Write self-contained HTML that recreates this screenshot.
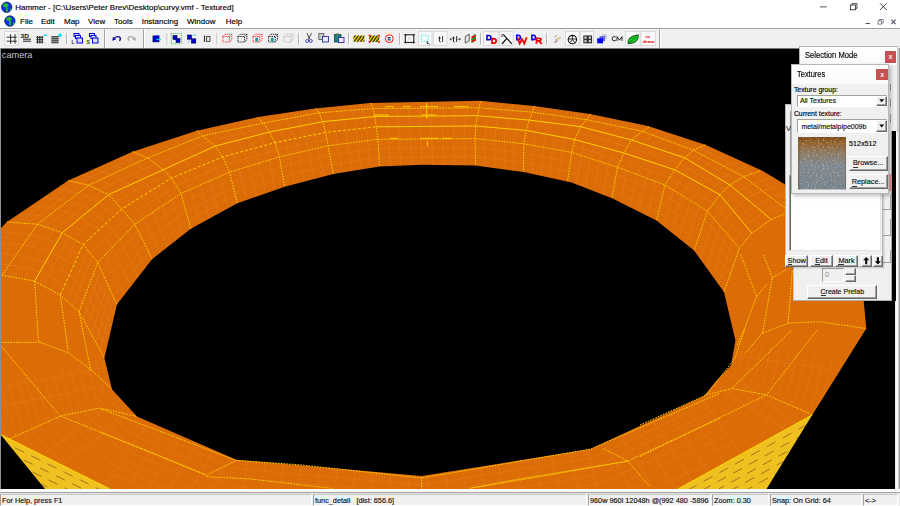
<!DOCTYPE html>
<html><head><meta charset="utf-8">
<style>
*{box-sizing:border-box;margin:0;padding:0}
html,body{width:900px;height:506px;overflow:hidden;background:#f0f0f0;font-family:"Liberation Sans",sans-serif;color:#000;-webkit-text-stroke:0.15px currentColor}
.a{position:absolute;white-space:pre}
#title{left:0;top:0;width:900px;height:14px;background:#fff}
#menu{left:0;top:14px;width:900px;height:14px;background:#fff}
#tb{left:0;top:29px;width:900px;height:20px;background:#f0f0f0}
#vp{left:1px;top:49px;width:894px;height:440px;background:#000;overflow:hidden}
.t8{font-size:8px;line-height:10px}
.t7{font-size:7px;line-height:9px}
.sb{top:494px;height:12px;border-top:1px solid #c8c8c8;border-left:1px solid #a0a0a0;border-right:1px solid #fff;border-bottom:1px solid #fff;font-size:7.3px;line-height:11px;padding-left:1px;overflow:hidden;color:#111}
.btn{background:#f0f0f0;border-top:1px solid #fff;border-left:1px solid #fff;border-right:1px solid #696969;border-bottom:1px solid #696969;box-shadow:inset -1px -1px 0 #a0a0a0;font-size:7.3px;line-height:10px;text-align:center;color:#111}
u{text-decoration:none;display:inline-block;line-height:6.2px;border-bottom:0.7px solid #333}
.combo{background:#fff;border-top:1px solid #a0a0a0;border-left:1px solid #a0a0a0;border-right:1px solid #fff;border-bottom:1px solid #fff;font-size:7px;line-height:10px;padding-left:1.5px}
.red{background:#c75050;color:#fff;font-size:7px;line-height:11px;text-align:center}
.combo{color:#111}
</style></head><body>
<div class="a" id="title"></div>
<div class="a t8" style="left:15.2px;top:3px">Hammer - [C:\Users\Peter Brev\Desktop\curvy.vmf - Textured]</div>
<div class="a" id="menu"></div>
<div class="a t8" style="left:20px;top:17px">File</div>
<div class="a t8" style="left:41px;top:17px">Edit</div>
<div class="a t8" style="left:64px;top:17px">Map</div>
<div class="a t8" style="left:88px;top:17px">View</div>
<div class="a t8" style="left:114px;top:17px">Tools</div>
<div class="a t8" style="left:141.7px;top:17px">Instancing</div>
<div class="a t8" style="left:187px;top:17px">Window</div>
<div class="a t8" style="left:225.7px;top:17px">Help</div>
<div class="a" style="left:0;top:28px;width:900px;height:1px;background:#a0a0a0"></div>
<div class="a" id="tb"></div>
<div class="a" style="left:0;top:48px;width:900px;height:1px;background:#7a7a7a"></div>
<svg class="a" style="left:0;top:0" width="900" height="50" viewBox="0 0 900 50">
<rect x="66" y="33" width="1" height="11.5" fill="#b4b4b4"/><rect x="67" y="33" width="1" height="11.5" fill="#fff"/>
<rect x="166.5" y="33" width="1" height="11.5" fill="#b4b4b4"/><rect x="167.5" y="33" width="1" height="11.5" fill="#fff"/>
<rect x="216.5" y="33" width="1" height="11.5" fill="#b4b4b4"/><rect x="217.5" y="33" width="1" height="11.5" fill="#fff"/>
<rect x="298" y="33" width="1" height="11.5" fill="#b4b4b4"/><rect x="299" y="33" width="1" height="11.5" fill="#fff"/>
<rect x="348" y="33" width="1" height="11.5" fill="#b4b4b4"/><rect x="349" y="33" width="1" height="11.5" fill="#fff"/>
<rect x="399" y="33" width="1" height="11.5" fill="#b4b4b4"/><rect x="400" y="33" width="1" height="11.5" fill="#fff"/>
<rect x="480" y="33" width="1" height="11.5" fill="#b4b4b4"/><rect x="481" y="33" width="1" height="11.5" fill="#fff"/>
<rect x="546" y="33" width="1" height="11.5" fill="#b4b4b4"/><rect x="547" y="33" width="1" height="11.5" fill="#fff"/>
<rect x="104" y="29.5" width="1" height="18.5" fill="#a0a0a0"/><rect x="105" y="29.5" width="1" height="18.5" fill="#fff"/>
<rect x="143" y="29.5" width="1" height="18.5" fill="#a0a0a0"/><rect x="144" y="29.5" width="1" height="18.5" fill="#fff"/>
<rect x="659" y="29.5" width="1" height="18.5" fill="#a0a0a0"/><rect x="660" y="29.5" width="1" height="18.5" fill="#fff"/>
<rect x="4.5" y="31.5" width="14.0" height="14.0" fill="#f9f9f9" stroke="#dadada" stroke-width="1"/>
<rect x="418.5" y="31.5" width="13.5" height="14.0" fill="#f9f9f9" stroke="#dadada" stroke-width="1"/>
<rect x="433.5" y="31.5" width="13.5" height="14.0" fill="#f9f9f9" stroke="#dadada" stroke-width="1"/>
<rect x="483.5" y="31.5" width="14.5" height="14.0" fill="#f9f9f9" stroke="#dadada" stroke-width="1"/>
<rect x="499.5" y="31.5" width="13.5" height="14.0" fill="#f9f9f9" stroke="#dadada" stroke-width="1"/>
<rect x="565.5" y="31.5" width="13.5" height="14.0" fill="#f9f9f9" stroke="#dadada" stroke-width="1"/>
<rect x="580.5" y="31.5" width="13.0" height="14.0" fill="#f9f9f9" stroke="#dadada" stroke-width="1"/>
<rect x="625.5" y="31.5" width="14.5" height="14.0" fill="#f9f9f9" stroke="#dadada" stroke-width="1"/>
<rect x="641" y="31.5" width="14.5" height="14.0" fill="#f9f9f9" stroke="#dadada" stroke-width="1"/>
<circle cx="6.7" cy="7.2" r="5.2" fill="#1030e0" stroke="#102060" stroke-width="0.8"/><path d="M3.7,3.7 Q7.7,2.2 8.7,5.2 L7.2,7.2 L8.2,11.2 L6.2,11.7 L5.7,7.2 L2.7,6.2Z" fill="#20c020"/><path d="M9.7,8.2 L11.7,9.2 L10.2,11.2Z" fill="#20c020"/>
<circle cx="9.9" cy="21" r="5.2" fill="#1030e0" stroke="#102060" stroke-width="0.8"/><path d="M6.9,17.5 Q10.9,16 11.9,19 L10.4,21 L11.4,25 L9.4,25.5 L8.9,21 L5.9,20Z" fill="#20c020"/><path d="M12.9,22 L14.9,23 L13.4,25Z" fill="#20c020"/>
<path d="M820,6.9H826.7" stroke="#222" stroke-width="0.8"/>
<rect x="850.5" y="5" width="5" height="4.8" fill="none" stroke="#222" stroke-width="0.8"/><path d="M852,5V3.6H857V8.4H855.5" fill="none" stroke="#222" stroke-width="0.8"/>
<path d="M880,3.3L886.7,10M886.7,3.3L880,10" stroke="#222" stroke-width="0.8"/>
<rect x="862.5" y="17" width="10.5" height="10" fill="#fff"/><rect x="875.5" y="17" width="10.5" height="10" fill="#fff"/><rect x="888" y="17" width="10" height="10" fill="#fff"/>
<path d="M865.5,23.5H870" stroke="#555" stroke-width="1.1"/>
<rect x="878" y="20.8" width="3.6" height="3.3" fill="none" stroke="#667" stroke-width="0.8"/><path d="M879.3,20.8V19.5H883.2V23H881.6" fill="none" stroke="#667" stroke-width="0.8"/>
<path d="M891.3,19.6L895.6,24.2M895.6,19.6L891.3,24.2" stroke="#556" stroke-width="1.2"/>
<!-- grid -->
<g stroke="#1a1a1a" stroke-width="0.9" fill="none">
<path d="M10.6,34.2V43.8M15,34.2V43.8M6.6,37.2H16.9M6.6,41.2H16.9"/>
</g>
<!-- 3D -->
<text x="20.6" y="37.8" font-family="Liberation Sans" font-weight="bold" font-size="6" fill="#111" textLength="8.4" lengthAdjust="spacingAndGlyphs">3D</text>
<path d="M23,39.2H31M23,41.2H31" stroke="#222" stroke-width="1"/>
<!-- grid minus -->
<path d="M37.5,36V43.4M39.8,36V43.4M42.1,36V43.4M36.3,37.3H43.3M36.3,39.7H43.3M36.3,42.1H43.3" stroke="#222" stroke-width="1"/>
<path d="M43.5,35.3H47" stroke="#00e0f0" stroke-width="1.3"/>
<!-- grid plus -->
<path d="M51.3,36.9H58.7M51.3,38.9H58.7M51.3,40.9H58.7M51.3,42.8H58.7" stroke="#222" stroke-width="1.1"/>
<path d="M58,35.3H62.2M60.1,33.2V37.4" stroke="#00e0f0" stroke-width="1.4"/>
<!-- L stack -->
<g fill="#dde" stroke="#0000e0" stroke-width="1">
<rect x="74" y="33.5" width="5" height="3"/><rect x="75.5" y="35.5" width="5" height="3"/><rect x="77" y="38" width="5.5" height="5"/>
<rect x="89.5" y="33.5" width="5" height="3"/><rect x="91" y="35.5" width="5" height="3"/><rect x="92.5" y="38" width="5.5" height="5"/>
</g>
<text x="71.4" y="43.6" font-family="Liberation Sans" font-weight="bold" font-size="5" fill="#333">L</text>
<text x="86.6" y="43.6" font-family="Liberation Sans" font-weight="bold" font-size="5" fill="#333">S</text>
<!-- undo/redo -->
<path d="M114.5,38.2 Q117,35.8 119.5,37 Q121.3,38.5 119.5,40.8" stroke="#000090" stroke-width="1.3" fill="none"/>
<path d="M112.3,40.8 L113,36.8 L116,39.6 Z" fill="#000090"/>
<path d="M134,38.2 Q131.5,35.8 129,37 Q127.2,38.5 129,40.8" stroke="#a8a8a8" stroke-width="1.2" fill="none"/>
<path d="M135.8,40.8 L135.2,36.8 L132.2,39.6 Z" fill="#a8a8a8"/>
<!-- blue cube arrow -->
<rect x="153" y="36" width="6" height="5.8" fill="#0000d8" stroke="#000050" stroke-width="0.8"/>
<path d="M153.5,36 L154.8,35 H159.6 L159,36Z" fill="#5060ff"/>
<path d="M156.5,39.5 H160.8" stroke="#00d8e8" stroke-width="1.3"/>
<!-- group -->
<rect x="171.3" y="33.5" width="10.3" height="10.3" fill="none" stroke="#30b030" stroke-width="0.9" stroke-dasharray="1,1"/>
<rect x="173" y="35.5" width="4" height="4" fill="#0000d0" stroke="#000040" stroke-width="0.6"/>
<rect x="176" y="38.5" width="4" height="4" fill="#0000d0" stroke="#000040" stroke-width="0.6"/>
<!-- ungroup -->
<rect x="187.5" y="35" width="4" height="4.2" fill="#0000d0" stroke="#000040" stroke-width="0.6"/>
<rect x="191.5" y="38.8" width="4.3" height="4.3" fill="#0000d0" stroke="#000040" stroke-width="0.6"/>
<path d="M192.5,35.5 L196,34.8 M187.5,42.5 L190,40.5" stroke="#40b8d8" stroke-width="0.8"/>
<!-- IQ -->
<path d="M204.5,35.6V41.8" stroke="#222" stroke-width="1.1"/>
<rect x="206.6" y="36.4" width="3.3" height="5" fill="none" stroke="#333" stroke-width="0.9"/>
<!-- dotted cubes -->
<g fill="none" stroke-width="1" stroke-dasharray="1,0.8">
<path d="M222.8,36.5 H229.5 V42 H222.8 Z M222.8,36.5 L225,34.3 H231.8 L229.5,36.5 M231.8,34.3 V39.8 L229.5,42" stroke="#ff2020"/>
<path d="M237.9,36.5 H244.6 V42 H237.9 Z M237.9,36.5 L240.1,34.3 H246.9 L244.6,36.5 M246.9,34.3 V39.8 L244.6,42" stroke="#111"/>
<path d="M253,36.5 H259.7 V42 H253 Z M253,36.5 L255.2,34.3 H262 L259.7,36.5 M262,34.3 V39.8 L259.7,42" stroke="#ff2020"/>
<path d="M268.6,36.5 H275.3 V42 H268.6 Z M268.6,36.5 L270.8,34.3 H277.6 L275.3,36.5 M277.6,34.3 V39.8 L275.3,42" stroke="#111"/>
<path d="M284.1,36.5 H290.8 V42 H284.1 Z M284.1,36.5 L286.3,34.3 H293.1 L290.8,36.5 M293.1,34.3 V39.8 L290.8,42" stroke="#b8b8b8"/>
</g>
<rect x="255.3" y="37.8" width="2.8" height="3.8" fill="#209898"/>
<rect x="270.9" y="37.8" width="2.8" height="3.8" fill="#209898"/>
<!-- scissors -->
<path d="M307,33.3 L309.8,39.5 M311.5,33.3 L308.2,39.5" stroke="#333" stroke-width="0.9"/>
<circle cx="307.2" cy="41" r="1.5" fill="none" stroke="#5050c0" stroke-width="1"/>
<circle cx="310.8" cy="41" r="1.5" fill="none" stroke="#5050c0" stroke-width="1"/>
<!-- copy -->
<rect x="318.8" y="33.5" width="5" height="6" fill="#c8c8c8" stroke="#555" stroke-width="0.8"/>
<rect x="322.5" y="36.5" width="6" height="5.5" fill="#e8e8ff" stroke="#3030a0" stroke-width="0.9"/>
<!-- paste -->
<rect x="334.5" y="34.5" width="6.5" height="7.5" fill="#208080" stroke="#104848" stroke-width="0.8"/>
<rect x="336.5" y="33.3" width="2.5" height="1.5" fill="#777"/>
<rect x="338.5" y="37.5" width="5.5" height="5" fill="#e8e8ff" stroke="#3030a0" stroke-width="0.9"/>
<!-- hazard -->
<defs><pattern id="hz" width="2.6" height="2.6" patternUnits="userSpaceOnUse" patternTransform="rotate(35)"><rect width="2.6" height="2.6" fill="#111"/><rect width="1.4" height="2.6" fill="#ffe800"/></pattern></defs>
<rect x="353.5" y="35.5" width="11" height="6.3" fill="url(#hz)"/>
<rect x="369.3" y="35.5" width="10" height="6.5" fill="url(#hz)"/>
<g fill="#ff1010"><circle cx="369.5" cy="35.4" r="1"/><circle cx="379" cy="35.4" r="1"/><circle cx="369.5" cy="42" r="1"/><circle cx="379" cy="42" r="1"/></g>
<circle cx="389.3" cy="38.7" r="3.9" fill="#fff" stroke="#ff1010" stroke-width="1"/>
<text x="387.6" y="40.5" font-family="Liberation Sans" font-weight="bold" font-size="4.6" fill="#111">R</text>
<!-- square corners -->
<rect x="405.3" y="34.8" width="8.5" height="7.6" fill="#f6f6f6" stroke="#111" stroke-width="1"/>
<g fill="#111"><circle cx="405.3" cy="34.8" r="0.9"/><circle cx="413.8" cy="34.8" r="0.9"/><circle cx="405.3" cy="42.4" r="0.9"/><circle cx="413.8" cy="42.4" r="0.9"/></g>
<path d="M408.3,37.3 L410.8,39.8 M410.8,37.3 L408.3,39.8" stroke="#bbb" stroke-width="0.6"/>
<!-- cyan dotted -->
<rect x="421.2" y="35.2" width="7" height="6.2" fill="none" stroke="#20e0f0" stroke-width="0.9" stroke-dasharray="0.9,0.9"/>
<path d="M427.3,41 V44 L428.2,43 L429.5,44.5" stroke="#222" stroke-width="0.8" fill="none"/>
<!-- tl -->
<path d="M439.5,36.5V41.5Q439.5,42 440.8,42M438.3,38.2H440.8M442.6,36V42" stroke="#333" stroke-width="1" fill="none"/>
<path d="M453.5,36.5V41.5Q453.5,42 454.8,42M452.3,38.2H454.8M456.6,36V42" stroke="#333" stroke-width="1" fill="none"/>
<path d="M450,39.2 H452.2 M450,39.2 L451.2,38.2 M450,39.2 L451.2,40.2 M457.5,39.2 H460.5 M460.5,39.2 L459.3,38.2 M460.5,39.2 L459.3,40.2" stroke="#333" stroke-width="0.8"/>
<!-- parallelograms -->
<path d="M465.3,36.5 L469.2,34.2 V40.8 L465.3,43 Z" fill="#eee" stroke="#333" stroke-width="0.8"/>
<path d="M471.5,36.5 L475.8,34.2 V40.8 L471.5,43 Z" fill="#e01010"/>
<path d="M471.5,38.8 L475.8,36.5 V38.5 L471.5,40.8Z M473.6,34.2 L475.8,34.2 V36 Z M471.5,43 V41.2 L473.5,42Z" fill="#10a030"/>
<!-- DD -->
<path d="M487.00,35.50V39.80H488.44Q491.00,39.80 491.00,37.65Q491.00,35.50 488.44,35.50Z" fill="none" stroke="#0000e0" stroke-width="1.6"/><path d="M492.00,38.70V43.10H493.46Q496.10,43.10 496.10,40.90Q496.10,38.70 493.46,38.70Z" fill="none" stroke="#e80000" stroke-width="1.8"/>
<text x="500.8" y="37.3" font-family="Liberation Sans" font-weight="bold" font-size="3.6" fill="#111">3</text>
<path d="M503.2,34.3 L511.8,43.8 M506.8,38.3 L502,44" stroke="#111" stroke-width="1.2" fill="none"/>
<path d="M516.80,35.30V39.60H518.08Q520.40,39.60 520.40,37.45Q520.40,35.30 518.08,35.30Z" fill="none" stroke="#0000e0" stroke-width="1.6"/><path d="M517.30,37.20L519.65,43.60L522.00,39.12L524.35,43.60L526.70,37.20" fill="none" stroke="#e80000" stroke-width="1.7"/>
<path d="M531.90,35.30V39.60H533.18Q535.50,39.60 535.50,37.45Q535.50,35.30 533.18,35.30Z" fill="none" stroke="#0000e0" stroke-width="1.6"/><path d="M536.45,43.80V38.35H538.70Q540.95,38.35 540.95,39.26Q540.95,40.96 538.70,40.96H536.45M538.70,40.96L541.80,43.80" fill="none" stroke="#e80000" stroke-width="1.7"/>
<!-- small colorful -->
<path d="M554.5,37 L557,35.5 M555,40 L560.5,37.5 M554,42.5 L558,40.5" stroke="#a09060" stroke-width="0.8"/>
<circle cx="556" cy="41.5" r="1" fill="#d060d0"/><circle cx="559.5" cy="38.5" r="0.9" fill="#e0d040"/>
<!-- circle globe -->
<circle cx="572.4" cy="39.6" r="4.2" fill="#fff" stroke="#111" stroke-width="1.1"/>
<path d="M568.3,39 H576.5 M572.4,35.5 V39 M570,42.5 L572.4,39.5 L574.8,42.5" stroke="#111" stroke-width="0.9" fill="none"/>
<!-- film grid -->
<rect x="583.3" y="35.4" width="8.8" height="8" fill="#333"/>
<path d="M584.5,36.5 H586.5 V38.8 H584.5Z M588.8,36.5 H590.8 V38.8 H588.8Z M584.5,40 H586.5 V42.3 H584.5Z M588.8,40 H590.8 V42.3 H588.8Z" fill="#ddd"/>
<!-- blue squares -->
<rect x="602" y="34.2" width="5" height="5" fill="#c8c8d8"/>
<rect x="599.5" y="36.2" width="5.5" height="5" fill="#6060e0"/>
<rect x="597.2" y="38.3" width="5.8" height="5" fill="#0000f0"/>
<!-- CM -->
<path d="M615.8,37.2Q615,36.6 614,36.6Q612.2,36.6 612.2,38.7Q612.2,40.8 614,40.8Q615,40.8 615.8,40.2M617,40.9V36.6L619.5,40.2L622,36.6V40.9" fill="none" stroke="#111" stroke-width="0.9"/>
<!-- leaf -->
<path d="M628.2,43.8 Q626.5,36.5 638.3,34.8 Q639,43.5 628.2,43.8Z" fill="#18c828" stroke="#084010" stroke-width="0.9"/><path d="M628.5,43.5 L636,37" stroke="#084010" stroke-width="0.6"/>
<!-- no draw -->
<text x="645.6" y="38.2" font-family="Liberation Sans" font-weight="bold" font-size="3.6" fill="#e00000">no</text>
<text x="642.8" y="42.5" font-family="Liberation Sans" font-weight="bold" font-size="4" fill="#e00000" textLength="11.5" lengthAdjust="spacingAndGlyphs">draw</text>

</svg>


<div class="a" id="vp">
<svg width="894" height="440" viewBox="1 49 894 440" style="position:absolute;left:0;top:0">
<path fill="#dc6d06" fill-rule="evenodd" d="M0.5,228.5 L6.9,222.1 L68.2,180.6 L132.5,151.7 L196.7,130.8 L258,117 L315,108.4 L370,103 L480,100.8 L534,106 L590,114 L648,126 L706,145 L761.8,170.4 L784.3,183.9 L830,240 L863.7,301 L866.3,328.6 L812.4,414.8 L678,489 L110,489 L0.5,434.5 Z
M104.4,358.1 L116.9,304.5 L152.2,259.1 L190.8,228.8 L237.3,203.3 L284.7,186.7 L333.3,174 L379.6,166.6 L422.2,164.8 L475.6,165.6 L523.6,172 L571.6,182.6 L612,198.2 L656.5,220.4 L694.1,250.6 L724,291.9 L735.4,340.5 L731.1,365.4 L716.4,380.7 L704,396 L590.5,449.1 L421.7,476 L236.3,459.8 L137,416.5 L111.9,389.3 Z"/>
<path fill="#f0c020" d="M0.5,434.5 L110,489 L45,489 L0.5,434.5 Z M812.4,414.8 L678,489 L766.5,489 Z"/>
<!--BG-->
<clipPath id="cro"><path d="M0.5,228.5 L6.9,222.1 L68.2,180.6 L132.5,151.7 L196.7,130.8 L258,117 L315,108.4 L370,103 L480,100.8 L534,106 L590,114 L648,126 L706,145 L761.8,170.4 L784.3,183.9 L830,240 L863.7,301 L866.3,328.6 L812.4,414.8 L678,489 L110,489 L0.5,434.5 Z"/></clipPath><clipPath id="cb"><path d="M0,340 L104,340 L104.4,358.1 L111.9,389.3 L137,416.5 L236.3,459.8 L421.7,476 L590.5,449.1 L704,396 L716.4,380.7 L731.1,365.4 L735.4,340.5 L900,340 L900,490 L0,490 Z"/></clipPath><g clip-path="url(#cro)"><path d="M95.6,360.2 L104.0,393.7 L132.6,424.3 L234.5,468.6 L422.0,485.0 L593.0,457.8 L708.3,403.9 L723.1,386.7 L739.2,369.2 L744.3,342.0 M86.9,362.3 L96.2,398.1 L128.1,432.2 L232.6,477.4 L422.2,494.0 L595.4,466.4 L712.6,411.8 L729.9,392.6 L747.4,373.1 L753.1,343.6 M78.1,364.4 L88.3,402.5 L123.7,440.0 L230.8,486.2 L422.5,503.0 L597.9,475.1 L716.9,419.7 L736.6,398.6 L755.5,376.9 L762.0,345.1 M69.4,366.5 L80.5,406.8 L119.3,447.8 L228.9,495.0 L422.8,512.0 L600.3,483.7 L721.2,427.6 L743.4,404.6 L763.6,380.8 L770.9,346.6 M60.6,368.6 L72.6,411.2 L114.8,455.7 L227.1,503.8 L423.1,521.0 L602.8,492.4 L725.5,435.5 L750.1,410.5 L771.8,384.6 L779.7,348.2 M51.9,370.7 L64.7,415.6 L110.4,463.5 L225.3,512.7 L423.3,530.0 L605.2,501.1 L729.8,443.4 L756.8,416.5 L779.9,388.5 L788.6,349.7 M43.1,372.8 L56.9,420.0 L105.9,471.3 L223.4,521.5 L423.6,539.0 L607.7,509.7 L734.1,451.4 L763.6,422.5 L788.1,392.3 L797.5,351.2 M34.4,374.9 L49.0,424.4 L101.5,479.1 L221.6,530.3 L423.9,548.0 L610.1,518.4 L738.4,459.3 L770.3,428.4 L796.2,396.2 L806.3,352.8 M25.6,377.0 L41.2,428.8 L97.1,487.0 L219.7,539.1 L424.1,557.0 L612.6,527.0 L742.7,467.2 L777.0,434.4 L804.3,400.0 L815.2,354.3 M16.9,379.1 L33.3,433.2 L92.6,494.8 L217.9,547.9 L424.4,566.0 L615.0,535.7 L747.0,475.1 L783.8,440.4 L812.5,403.9 L824.1,355.8 M8.1,381.2 L25.5,437.6 L88.2,502.6 L216.0,556.7 L424.7,575.0 L617.5,544.3 L751.3,483.0 L790.5,446.3 L820.6,407.7 L833.0,357.3 M-0.6,383.3 L17.6,441.9 L83.8,510.5 L214.2,565.5 L425.0,584.0 L619.9,553.0 L755.6,490.9 L797.3,452.3 L828.7,411.5 L841.8,358.9 M-9.4,385.4 L9.7,446.3 L79.3,518.3 L212.4,574.3 L425.2,592.9 L622.4,561.7 L759.9,498.8 L804.0,458.3 L836.9,415.4 L850.7,360.4 M106.5,366.9L-59.5,399.6 M110.7,384.4L-54.9,417.1 M120.7,398.8L-10.7,493.7 M132.9,412.0L2.6,507.0 M147.9,421.3L66.0,549.6 M164.4,428.5L84.1,556.8 M180.9,435.6L102.2,564.0 M197.4,442.8L120.2,571.2 M213.9,450.0L138.3,578.4 M230.4,457.2L156.4,585.6 M247.8,460.8L219.2,600.3 M265.8,462.4L238.9,601.8 M283.7,463.9L258.5,603.4 M301.6,465.5L278.2,605.0 M319.6,467.1L297.8,606.5 M337.5,468.6L317.4,608.1 M355.4,470.2L337.1,609.7 M373.3,471.8L356.7,611.2 M391.3,473.3L376.4,612.8 M409.2,474.9L396.0,614.4 M427.1,475.1L449.8,613.4 M444.9,472.3L469.3,610.6 M462.6,469.5L488.7,607.7 M480.4,466.6L508.2,604.9 M498.2,463.8L527.7,602.1 M516.0,461.0L547.1,599.2 M533.7,458.1L566.6,596.4 M551.5,455.3L586.1,593.6 M569.3,452.5L605.6,590.7 M587.1,449.6L625.0,587.9 M603.7,442.9L680.5,569.7 M620.0,435.3L698.3,562.1 M636.3,427.7L716.2,554.5 M652.6,420.1L734.1,546.9 M668.9,412.4L751.9,539.2 M685.2,404.8L769.8,531.6 M701.5,397.2L787.6,524.0 M713.6,384.2L850.3,472.3 M725.8,370.9L855.9,467.9 M732.9,355.2L900.6,379.1" clip-path="url(#cb)" fill="none" stroke="#f09048" stroke-opacity="0.3" stroke-width="0.8"/></g>
<!--/BG-->
<!--YM-->
<clipPath id="cl"><path d="M0.5,434.5 L110,489 L45,489 Z"/></clipPath><clipPath id="cr"><path d="M812.4,414.8 L678,489 L766.5,489 Z"/></clipPath>
<path d="M-33.4,424.1L140.2,509.4 M-40.8,428.2L137.1,515.7 M-48.2,432.4L134.0,521.9 M-42.7,442.9L130.9,528.2" clip-path="url(#cl)" fill="none" stroke="#705018" stroke-opacity="0.65" stroke-width="1" stroke-dasharray="10,8"/>
<path d="M640.6,516.0L855.6,397.9 M638.6,525.1L859.0,404.1 M636.6,534.2L862.3,410.2 M650.7,534.4L865.7,416.3 M648.7,543.5L869.1,422.5" clip-path="url(#cr)" fill="none" stroke="#705018" stroke-opacity="0.65" stroke-width="1" stroke-dasharray="10,8"/>
<path d="M0.5,434.5 L110,489 M812.4,414.8 L678,489" stroke="#ffe000" stroke-width="1"/>
<!--/YM-->
<!--RL-->
<path d="M-22.6,262.0L9.1,265.0 M-15.2,252.0L16.2,254.8 M-7.9,242.1L23.3,244.6 M-0.5,232.1L30.4,234.4 M-19.3,273.1L17.1,222.8 M-8.7,274.1L27.3,223.5 M9.1,265.0L40.1,271.4 M16.2,254.8L45.7,261.7 M23.3,244.6L51.2,252.1 M30.4,234.4L56.8,242.4 M12.9,277.2L45.8,227.0 M23.7,279.1L54.0,229.9 M40.1,271.4L64.8,284.9 M45.7,261.7L69.4,274.8 M51.2,252.1L73.9,264.8 M56.8,242.4L78.5,254.7 M43.2,285.7L69.2,236.7 M51.7,290.4L76.1,240.6 M64.8,284.9L82.8,301.8 M69.4,274.8L86.5,291.9 M73.9,264.8L90.3,282.1 M78.5,254.7L94.0,272.2 M66.5,300.5L87.9,250.5 M72.8,306.1L92.9,256.5 M82.8,301.8L106.9,347.4 M86.5,291.9L109.4,336.7 M90.3,282.1L111.9,325.9 M94.0,272.2L114.4,315.2 M83.2,319.4L101.0,269.4 M87.5,327.1L104.2,276.4 M91.7,334.9L107.3,283.4 M95.9,342.6L110.5,290.5 M100.2,350.4L113.7,297.5 M19.2,213.8L47.7,216.4 M31.4,205.5L57.9,208.6 M43.7,197.2L68.2,200.8 M55.9,188.9L78.4,193.0 M17.1,222.8L75.0,182.1 M27.3,223.5L81.8,183.7 M47.7,216.4L71.6,225.1 M57.9,208.6L80.9,217.5 M68.2,200.8L90.1,209.8 M78.4,193.0L99.4,202.2 M45.8,227.0L95.3,188.3 M54.0,229.9L102.0,191.5 M71.6,225.1L90.8,237.5 M80.9,217.5L98.5,230.3 M90.1,209.8L106.3,223.2 M99.4,202.2L114.0,216.0 M72.7,238.6L115.2,201.8 M90.8,237.5L105.2,254.8 M98.5,230.3L112.6,247.2 M106.3,223.2L120.0,239.5 M114.0,216.0L127.4,231.9 M90.4,253.5L128.3,216.6 M105.2,254.8L124.0,295.4 M112.6,247.2L131.0,286.3 M120.0,239.5L138.1,277.3 M127.4,231.9L145.1,268.2 M101.6,270.8L138.3,231.3 M105.4,279.2L141.8,238.2 M109.3,287.7L145.2,245.2 M113.1,296.1L148.7,252.1 M81.1,174.8L100.4,179.7 M93.9,169.0L112.3,174.3 M106.8,163.3L124.1,168.8 M119.6,157.5L136.0,163.4 M78.4,182.9L140.2,154.8 M100.4,179.7L119.6,189.6 M112.3,174.3L130.5,184.7 M124.1,168.8L141.4,179.7 M136.0,163.4L152.3,174.8 M98.7,189.9L155.5,163.9 M119.6,189.6L131.7,202.7 M130.5,184.7L141.7,196.6 M141.4,179.7L151.6,190.4 M152.3,174.8L161.6,184.3 M115.2,201.8L167.3,173.9 M131.7,202.7L144.0,218.1 M141.7,196.6L153.3,212.0 M151.6,190.4L162.5,205.8 M161.6,184.3L171.8,199.7 M128.3,216.6L176.2,185.8 M144.0,218.1L159.9,253.0 M153.3,212.0L167.6,247.0 M162.5,205.8L175.4,240.9 M171.8,199.7L183.1,234.9 M139.2,233.0L183.4,202.3 M143.5,241.7L185.9,211.2 M147.8,250.4L188.4,220.0 M145.3,147.5L158.8,153.5 M158.2,143.4L169.7,149.1 M171.0,139.2L180.7,144.7 M183.9,135.1L191.6,140.3 M158.8,153.5L173.6,165.0 M169.7,149.1L184.0,160.3 M180.7,144.7L194.4,155.5 M191.6,140.3L204.8,150.8 M155.5,163.9L208.9,140.9 M173.6,165.0L181.8,173.9 M184.0,160.3L192.0,169.6 M194.4,155.5L202.3,165.4 M204.8,150.8L212.5,161.1 M181.8,173.9L190.7,189.2 M192.0,169.6L200.4,184.9 M202.3,165.4L210.1,180.7 M212.5,161.1L219.8,176.4 M176.2,185.8L226.2,164.5 M190.7,189.2L200.1,223.7 M200.4,184.9L209.4,218.6 M210.1,180.7L218.7,213.5 M219.8,176.4L228.0,208.4 M183.4,202.3L231.4,179.9 M185.9,211.2L233.4,187.7 M188.4,220.0L235.4,195.5 M209.0,128.3L214.7,133.3 M221.2,125.7L226.9,130.8 M233.5,123.0L239.0,128.2 M245.7,120.4L251.2,125.7 M214.7,133.3L226.1,143.2 M226.9,130.8L237.0,140.4 M239.0,128.2L247.8,137.6 M251.2,125.7L258.7,134.8 M208.9,140.9L266.5,127.5 M226.1,143.2L233.2,154.1 M237.0,140.4L243.6,151.2 M247.8,137.6L254.1,148.4 M258.7,134.8L264.5,145.5 M233.2,154.1L239.5,169.1 M243.6,151.2L249.5,166.0 M254.1,148.4L259.4,163.0 M264.5,145.5L269.4,159.9 M226.2,164.5L277.1,149.8 M239.5,169.1L246.8,200.0 M249.5,166.0L256.3,196.7 M259.4,163.0L265.7,193.3 M269.4,159.9L275.2,190.0 M232.1,182.5L281.2,166.8 M234.7,192.9L282.9,176.8 M269.5,115.9L274.5,121.0 M281.1,114.0L285.7,119.0 M292.6,112.1L296.8,116.9 M304.2,110.2L308.0,114.9 M274.5,121.0L280.2,129.9 M285.7,119.0L290.9,127.9 M296.8,116.9L301.5,125.8 M308.0,114.9L312.2,123.8 M280.2,129.9L285.0,140.6 M290.9,127.9L295.1,138.6 M301.5,125.8L305.3,136.5 M312.2,123.8L315.4,134.5 M285.0,140.6L289.1,154.7 M295.1,138.6L298.9,152.4 M305.3,136.5L308.6,150.2 M315.4,134.5L318.4,147.9 M277.1,149.8L326.8,139.1 M289.1,154.7L294.4,184.2 M298.9,152.4L304.1,181.6 M308.6,150.2L313.9,179.1 M318.4,147.9L323.6,176.5 M281.2,166.8L329.8,155.1 M282.9,176.8L331.6,164.6 M326.7,107.3L330.0,112.0 M337.7,106.2L340.8,111.1 M348.8,105.2L351.6,110.3 M359.8,104.1L362.4,109.4 M330.0,112.0L333.2,120.7 M340.8,111.1L343.6,119.6 M351.6,110.3L353.9,118.6 M362.4,109.4L364.3,117.5 M333.2,120.7L335.7,131.3 M343.6,119.6L345.8,130.2 M353.9,118.6L356.0,129.0 M364.3,117.5L366.1,127.9 M335.7,131.3L338.1,144.4 M345.8,130.2L348.0,143.2 M356.0,129.0L358.0,141.9 M366.1,127.9L367.9,140.7 M338.1,144.4L342.6,172.5 M348.0,143.2L351.8,171.0 M358.0,141.9L361.1,169.6 M367.9,140.7L370.3,168.1 M329.8,155.1L378.5,148.5 M331.6,164.6L379.0,157.5 M383.0,102.9L385.0,108.5 M395.2,102.7L396.7,108.4 M407.4,102.6L408.5,108.3 M419.6,102.4L420.2,108.2 M431.7,102.2L432.0,108.2 M443.9,102.0L443.7,108.1 M456.1,101.9L455.5,108.0 M468.3,101.7L467.2,107.9 M385.0,108.5L386.1,116.4 M396.7,108.4L397.5,116.3 M408.5,108.3L408.9,116.2 M420.2,108.2L420.3,116.1 M432.0,108.2L431.8,116.1 M443.7,108.1L443.2,116.0 M455.5,108.0L454.6,115.9 M467.2,107.9L466.0,115.8 M386.1,116.4L387.4,126.7 M397.5,116.3L398.4,126.6 M408.9,116.2L409.5,126.5 M420.3,116.1L420.5,126.4 M431.8,116.1L431.6,126.4 M443.2,116.0L442.6,126.3 M454.6,115.9L453.7,126.2 M466.0,115.8L464.7,126.1 M387.4,126.7L388.7,139.3 M398.4,126.6L399.5,139.2 M409.5,126.5L410.3,139.1 M420.5,126.4L421.1,139.0 M431.6,126.4L431.8,139.0 M442.6,126.3L442.6,138.9 M453.7,126.2L453.4,138.8 M464.7,126.1L464.2,138.7 M388.7,139.3L390.3,166.5 M399.5,139.2L400.9,166.4 M410.3,139.1L411.6,166.3 M421.1,139.0L422.3,166.2 M431.8,139.0L432.9,166.0 M442.6,138.9L443.6,165.9 M453.4,138.8L454.3,165.8 M464.2,138.7L464.9,165.7 M378.5,148.5L475.2,147.6 M379.0,157.5L475.4,156.6 M491.4,102.4L489.7,108.7 M502.2,103.3L500.4,109.6 M513.1,104.1L511.0,110.4 M523.9,105.0L521.7,111.3 M489.7,108.7L487.8,116.6 M500.4,109.6L498.1,117.5 M511.0,110.4L508.5,118.3 M521.7,111.3L518.8,119.2 M487.8,116.6L485.9,126.9 M498.1,117.5L495.9,127.8 M508.5,118.3L506.0,128.6 M518.8,119.2L516.0,129.5 M485.9,126.9L484.7,139.6 M495.9,127.8L494.5,140.7 M506.0,128.6L504.2,141.7 M516.0,129.5L514.0,142.8 M484.7,139.6L485.2,166.9 M494.5,140.7L494.8,168.2 M504.2,141.7L504.4,169.4 M514.0,142.8L514.0,170.7 M475.2,147.6L523.7,153.2 M475.4,156.6L523.6,162.6 M546.0,107.5L543.2,113.7 M557.1,109.1L554.1,115.2 M568.3,110.7L564.9,116.8 M579.4,112.3L575.8,118.3 M543.2,113.7L539.5,121.4 M554.1,115.2L549.8,122.7 M564.9,116.8L560.1,124.1 M575.8,118.3L570.4,125.4 M539.5,121.4L535.8,132.2 M549.8,122.7L545.6,134.1 M560.1,124.1L555.3,135.9 M570.4,125.4L565.1,137.8 M535.8,132.2L533.3,145.5 M545.6,134.1L542.9,147.2 M555.3,135.9L552.6,149.0 M565.1,137.8L562.2,150.7 M533.3,145.5L532.4,173.9 M542.9,147.2L541.2,175.8 M552.6,149.0L549.9,177.7 M562.2,150.7L558.7,179.6 M523.7,153.2L570.4,162.1 M523.6,162.6L568.9,171.8 M602.3,116.5L597.8,122.1 M613.9,119.1L608.9,124.4 M625.6,121.8L620.1,126.7 M637.2,124.4L631.2,129.0 M597.8,122.1L590.9,129.4 M608.9,124.4L601.0,132.0 M620.1,126.7L611.2,134.7 M631.2,129.0L621.3,137.3 M590.9,129.4L584.6,142.3 M601.0,132.0L594.4,145.0 M611.2,134.7L604.3,147.6 M621.3,137.3L614.1,150.3 M577.8,133.2L627.7,146.5 M584.6,142.3L580.9,155.4 M594.4,145.0L590.0,158.3 M604.3,147.6L599.2,161.3 M614.1,150.3L608.3,164.2 M573.3,146.0L620.6,160.1 M580.9,155.4L576.4,184.8 M590.0,158.3L585.3,188.2 M599.2,161.3L594.2,191.5 M608.3,164.2L603.1,194.9 M570.4,162.1L615.6,177.5 M568.9,171.8L613.8,187.9 M660.2,130.6L652.6,135.1 M671.4,134.1L662.8,138.9 M682.7,137.7L672.9,142.6 M693.9,141.2L683.1,146.4 M652.6,135.1L642.1,143.6 M662.8,138.9L652.7,147.1 M672.9,142.6L663.4,150.7 M683.1,146.4L674.0,154.2 M642.1,143.6L634.1,156.4 M652.7,147.1L644.3,159.7 M663.4,150.7L654.4,163.1 M674.0,154.2L664.6,166.4 M627.7,146.5L679.7,163.8 M634.1,156.4L626.9,170.8 M644.3,159.7L636.4,174.3 M654.4,163.1L646.0,177.9 M664.6,166.4L655.5,181.4 M620.6,160.1L669.9,177.4 M626.9,170.8L620.9,202.6 M636.4,174.3L629.8,207.1 M646.0,177.9L638.7,211.5 M655.5,181.4L647.6,216.0 M616.0,174.9L662.9,193.8 M614.7,182.7L660.8,202.7 M613.4,190.4L658.6,211.6 M716.2,150.1L703.4,155.5 M727.2,155.3L713.4,160.8 M738.2,160.6L723.5,166.0 M749.2,165.8L733.5,171.3 M699.2,147.5L751.9,173.8 M703.4,155.5L693.6,163.2 M713.4,160.8L702.7,168.6 M723.5,166.0L711.7,174.1 M733.5,171.3L720.8,179.5 M689.0,154.0L736.7,180.8 M693.6,163.2L683.8,174.8 M702.7,168.6L692.9,179.8 M711.7,174.1L701.9,184.8 M720.8,179.5L711.0,189.8 M679.7,163.8L724.9,189.9 M683.8,174.8L673.5,190.2 M692.9,179.8L682.0,195.4 M701.9,184.8L690.4,200.7 M711.0,189.8L698.9,205.9 M669.9,177.4L713.7,202.9 M673.5,190.2L664.0,226.4 M682.0,195.4L671.5,232.5 M690.4,200.7L679.1,238.5 M698.9,205.9L686.6,244.6 M662.9,193.8L704.1,221.0 M660.8,202.7L700.8,230.8 M658.6,211.6L697.4,240.7 M770.2,177.9L752.9,183.7 M780.1,184.7L762.2,190.8 M790.1,191.4L771.4,197.8 M800.0,198.2L780.7,204.9 M751.9,173.8L800.0,208.5 M752.9,183.7L738.1,191.8 M762.2,190.8L746.4,198.7 M771.4,197.8L754.6,205.6 M780.7,204.9L762.9,212.5 M736.7,180.8L780.6,215.7 M738.1,191.8L726.4,202.5 M746.4,198.7L732.8,210.2 M754.6,205.6L739.1,217.8 M762.9,212.5L745.5,225.5 M724.9,189.9L761.5,226.3 M726.4,202.5L713.8,218.6 M732.8,210.2L720.2,226.0 M739.1,217.8L726.6,233.5 M745.5,225.5L733.0,240.9 M713.7,202.9L745.6,240.8 M713.8,218.6L700.1,258.9 M720.2,226.0L706.1,267.1 M726.6,233.5L712.0,275.4 M733.0,240.9L718.0,283.6 M704.7,219.0L736.3,257.1 M702.1,226.9L733.2,265.8 M699.4,234.8L730.2,274.5 M696.8,242.7L727.1,283.2" fill="none" stroke="#f09048" stroke-opacity="0.3" stroke-width="0.8"/>
<path d="M2.0,275.2 L34.6,281.1 L60.3,295.0 L79.0,311.6 L104.4,358.1 M6.9,222.1 L37.5,224.2 L62.3,232.7 L83.0,244.6 L97.8,262.4 L116.9,304.5 M68.2,180.6 L88.6,185.2 L108.7,194.6 L121.8,208.9 L134.8,224.3 L152.2,259.1 M132.5,151.7 L147.8,157.9 L163.2,169.8 L171.5,178.1 L181.0,193.5 L190.8,228.8 M196.7,130.9 L202.6,135.9 L215.2,146.0 L222.8,156.9 L229.5,172.1 L237.3,203.3 M258.0,117.8 L263.3,123.1 L269.6,132.0 L274.9,142.7 L279.4,156.9 L284.7,186.7 M315.7,108.3 L319.2,112.8 L322.8,121.7 L325.5,132.4 L328.1,145.7 L333.3,174.0 M370.8,103.1 L373.2,108.6 L374.7,116.5 L376.3,126.8 L377.9,139.4 L379.6,166.6 M480.5,101.5 L479.0,107.8 L477.4,115.7 L475.8,126.0 L475.0,138.6 L475.6,165.6 M534.8,105.9 L532.4,112.2 L529.2,120.1 L526.1,130.4 L523.7,143.8 L523.6,172.0 M590.6,113.9 L586.6,119.8 L580.7,126.7 L574.8,139.6 L571.8,152.4 L567.5,181.5 M648.9,127.0 L642.4,131.3 L631.5,140.0 L623.9,153.0 L617.4,167.2 L612.0,198.2 M705.2,144.8 L693.3,150.2 L684.6,157.8 L674.8,169.8 L665.0,185.0 L656.5,220.4 M760.2,171.1 L743.6,176.6 L729.8,184.9 L720.0,194.8 L707.4,211.1 L694.1,250.6 M810.0,205.0 L790.0,212.0 L771.2,219.4 L751.9,233.2 L739.4,248.4 L724.0,291.9" fill="none" stroke="#ffd000" stroke-width="1" stroke-dasharray="1.6,1.2"/>
<path d="M2.0,275.2 L37.5,224.2 L88.6,185.2 L147.8,157.9 L202.6,135.9 L263.3,123.1 L319.2,112.8 L373.2,108.6 L479.0,107.8 L532.4,112.2 L586.6,119.8 L642.4,131.3 L693.3,150.2 L743.6,176.6 L790.0,212.0" fill="none" stroke="#ffd000" stroke-width="1" stroke-dasharray="1.6,1.2"/>
<path d="M34.6,281.1 L62.3,232.7 L108.7,194.6 L163.2,169.8 L215.2,146.0 L269.6,132.0 L322.8,121.7 L374.7,116.5 L477.4,115.7 L529.2,120.1 L580.7,126.7 L631.5,140.0 L684.6,157.8 L729.8,184.9 L771.2,219.4" fill="none" stroke="#ffd000" stroke-width="1" />
<path d="M79.0,311.6 L97.8,262.4 L134.8,224.3 L181.0,193.5 L229.5,172.1 L279.4,156.9 L328.1,145.7 L377.9,139.4 L475.0,138.6 L523.7,143.8 L571.8,152.4 L617.4,167.2 L665.0,185.0 L707.4,211.1 L739.4,248.4" fill="none" stroke="#ffd000" stroke-width="1" stroke-dasharray="1.6,1.2"/>
<path d="M60.3,295.0 L83.0,244.6 L121.8,208.9 L171.5,178.1 L222.8,156.9 L274.9,142.7 L325.5,132.4 L376.3,126.8" fill="none" stroke="#ffd000" stroke-width="1" stroke-dasharray="3,2"/>
<path d="M376.3,126.8 L475.8,126.0 L526.1,130.4 L574.8,139.6 L623.9,153.0 L674.8,169.8 L720.0,194.8 L751.9,233.2" fill="none" stroke="#ffd000" stroke-width="1"/>
<path d="M2.0,346.9 L59.3,415.1 M39.5,342.0 L68.2,352.8 L90.9,369.6 L111.9,389.3 M34.6,281.1 L38.5,342.3 M60.3,295.0 L68.2,351.1 M79.0,311.6 L90.9,371.0 M7.1,440.0 L60.5,416.0 L99.6,408.0 L137.0,416.5 M60.5,416.0 L140.0,448.0 L206.7,475.2 L236.3,460.4 M100.0,408.5 L236.3,460.4 L300.0,464.8 L421.7,478.0 L590.5,449.1 L720.0,393.2 M100.0,432.2 L206.7,475.2 M206.7,476.7 L250.0,479.0 L333.0,488.5 M470.0,488.3 L550.0,475.0 L627.9,461.0 L720.0,418.0 M421.7,477 L421.7,489 M603.0,448.5 L627.9,461.0 L650.0,487.0 M627.9,461.0 L520.0,479.0 L470.0,488.3 M640.0,456.5 L766.5,394.9 L817.2,330.0 M640.0,424.9 L706.4,394.9 L731.7,388.5 L766.5,394.9 L812.4,414.8 M731.7,388.5 L791.8,330.0 M744.4,330.0 L734.9,358.5 L706.4,394.9 M740.8,255.0 L756.6,296.5 L744.8,328.1 L736.9,345.9 M763.5,255.0 L772.4,277.7 L762.5,333.1 L744.8,353.8 M772.4,277.7 L791.2,266.9 M762.5,333.1 L788.2,323.2 L792.2,270.8 M788.2,323.2 L819.6,321.7 L866.3,328.6 M756.6,296.5 L766.5,284.6 M2.0,342.4 L33.6,342.4 L39.5,342.0" fill="none" stroke="#ffd000" stroke-width="1" stroke-dasharray="1.6,1.2"/>
<!--TOPX--><path d="M385.3,106.7H394M402.7,106.7H410.7M420,106.7H438M454,106.7H468.7M426.7,103V119M421.3,115H436M374,115H389M427.3,141V146.3M420,138.3H439M390,138.3H398M442,138.3H452" stroke="#ffd000" stroke-width="1"/><!--/TOPX-->
<!--/RL-->
</svg>
</div>
<div class="a" style="left:1.8px;top:50px;font-size:9.2px;line-height:10px;color:#c4c4c4;-webkit-text-stroke:0">camera</div>
<div class="a" style="left:895px;top:48px;width:5px;height:441px;background:linear-gradient(90deg,#e8e8e8 0,#fff 40%,#f4f4f4 60%,#c0c0c0 75%,#808080 100%)"></div>
<div class="a" style="left:0;top:48px;width:1px;height:441px;background:#8a9098"></div>

<!-- status bar -->
<div class="a" style="left:0;top:489px;width:900px;height:17px;background:#f0f0f0"></div>
<div class="a" style="left:0;top:489px;width:900px;height:3px;background:#fafafa"></div>
<div class="a" style="left:0;top:492px;width:900px;height:1px;background:#a4a4a4"></div>
<div class="a" style="left:0;top:493px;width:900px;height:1px;background:#e4e4e4"></div>
<div class="a sb" style="left:0;width:312px">For Help, press F1</div>
<div class="a sb" style="left:313px;width:274px">func_detail   [dist: 656.6]</div>
<div class="a sb" style="left:588px;width:123px">960w 960l 12048h @(992 480 -5896</div>
<div class="a sb" style="left:712px;width:57px">Zoom: 0.30</div>
<div class="a sb" style="left:770px;width:92px">Snap: On Grid: 64</div>
<div class="a sb" style="left:863px;width:35px">&lt;-&gt;</div>

<!-- dialogs -->
<!-- selection mode window -->
<div class="a" style="left:798.7px;top:45.5px;width:99px;height:86px;background:#f0f0f0;border:1px solid #b4b4b4;border-bottom:none"></div>
<div class="a" style="left:799.7px;top:46.5px;width:97px;height:18px;background:linear-gradient(#fff,#fafafa)"></div>
<div class="a" style="left:890.5px;top:131px;width:5px;height:170px;background:#000"></div>
<div class="a" style="left:793px;top:131px;width:98.6px;height:170px;background:#f0f0f0;border-left:1px solid #c8c8c8;border-bottom:1px solid #b0b0b0;border-right:1px solid #a8a8a8"></div>
<div class="a" style="left:897px;top:46px;width:1px;height:85px;background:#c8c8c8"></div>
<div class="a" style="left:890px;top:84px;width:1px;height:7px;background:#a0a0a0"></div><div class="a" style="left:890px;top:99px;width:1px;height:8px;background:#a0a0a0"></div><div class="a" style="left:890px;top:114px;width:1px;height:9px;background:#a0a0a0"></div>
<div class="a dt" style="left:804.5px;top:51.3px;font-size:8.2px;line-height:10px;transform:scaleX(0.93);transform-origin:0 0">Selection Mode</div>
<div class="a red" style="left:884.6px;top:51.3px;width:11.8px;height:12px">x</div>
<div class="a" style="left:880px;top:195px;width:11px;height:14.5px;border-right:1px solid #a0a0a0;border-bottom:1px solid #a0a0a0"></div>
<div class="a" style="left:880px;top:219.3px;width:11px;height:16.7px;border-right:1px solid #a0a0a0;border-bottom:1px solid #a0a0a0"></div>
<div class="a" style="left:880px;top:250px;width:11px;height:13.3px;border-right:1px solid #a0a0a0;border-bottom:1px solid #a0a0a0"></div>
<div class="a" style="left:821.8px;top:268.3px;width:22.2px;height:13.4px;background:#f0f0f0;border-top:1px solid #a0a0a0;border-left:1px solid #a0a0a0;border-right:1px solid #fff;border-bottom:1px solid #fff"></div>
<div class="a" style="left:825px;top:269px;font-size:7.5px;line-height:11px;color:#a0a0a0">0</div>
<div class="a btn" style="left:844.9px;top:268.3px;width:10.8px;height:6.7px"></div>
<div class="a btn" style="left:844.9px;top:275px;width:10.8px;height:6.7px"></div>
<div class="a btn" style="left:807.3px;top:285px;width:70px;height:14.4px;line-height:12.5px;font-size:7px"><u>C</u>reate Prefab</div>

<!-- visgroup window -->
<div class="a" style="left:785.3px;top:103.7px;width:97.6px;height:163.5px;background:#f0f0f0;border:1px solid #b8b8b8;box-shadow:1px 1px 2px rgba(0,0,0,0.2)"></div>
<div class="a" style="left:790px;top:110.8px;width:1px;height:140px;background:#a0a0a0"></div>
<div class="a" style="left:786px;top:124px;font-size:7.5px;line-height:9px;color:#333">V</div>
<div class="a" style="left:789px;top:175px;width:92px;height:76px;background:#fff;border-top:1px solid #a0a0a0;border-left:1px solid #a0a0a0;border-right:1px solid #e4e4e4;border-bottom:1px solid #e4e4e4;box-shadow:inset 1px 1px 0 #696969"></div>
<div class="a btn" style="left:785.1px;top:255px;width:23.3px;height:11.7px"><u>S</u>how</div>
<div class="a btn" style="left:810.1px;top:255px;width:22.8px;height:11.7px"><u>E</u>dit</div>
<div class="a btn" style="left:835.1px;top:255px;width:22.8px;height:11.7px"><u>M</u>ark</div>
<div class="a btn" style="left:860.7px;top:255px;width:11.1px;height:11.7px"></div>
<div class="a btn" style="left:872.9px;top:255px;width:10px;height:11.7px"></div>
<svg class="a" style="left:860px;top:254px" width="24" height="14" viewBox="860 254 24 14">
<path d="M866.2,257 L869.2,260.2 H867.2 V264.3 H865.2 V260.2 H863.2 Z" fill="#000"/>
<path d="M877.9,264.5 L880.9,261.3 H878.9 V257.2 H876.9 V261.3 H874.9 Z" fill="#000"/>
</svg>

<!-- textures window -->
<div class="a" style="left:790.8px;top:63.5px;width:98.3px;height:130.1px;background:#f0f0f0;border:1px solid #b8b8b8;box-shadow:2px 2px 4px rgba(0,0,0,0.25)"></div>
<div class="a" style="left:791.8px;top:64.5px;width:96.3px;height:19px;background:linear-gradient(#fff,#fbfbfb)"></div>
<div class="a" style="left:796.9px;top:68.5px;font-size:8.3px;line-height:10px;transform:scaleX(0.9);transform-origin:0 0">Textures</div>
<div class="a red" style="left:876.3px;top:68.7px;width:11.8px;height:11.8px">x</div>
<div class="a" style="left:793.9px;top:84.5px;font-size:6.9px;line-height:9px">Texture group:</div>
<div class="a combo" style="left:797.4px;top:94.5px;width:89.3px;height:12px;line-height:10px">All Textures</div>
<div class="a btn" style="left:876.3px;top:95.5px;width:10.3px;height:10.3px"></div>
<div class="a" style="left:793.9px;top:109px;font-size:6.9px;line-height:9px">Current texture:</div>
<div class="a combo" style="left:797.4px;top:118.8px;width:89.3px;height:13.8px;line-height:13px;padding-left:3px">metal/metalpipe009b</div>
<div class="a btn" style="left:876.3px;top:120px;width:10.3px;height:11.5px"></div>
<svg class="a" style="left:870px;top:90px" width="20" height="50" viewBox="870 90 20 50">
<path d="M879.2,99.3 H884.2 L881.7,102.2 Z M879.2,124.5 H884.2 L881.7,127.4 Z" fill="#000"/>
</svg>
<svg class="a" style="left:797.6px;top:137.4px" width="48.6" height="52.4" viewBox="0 0 48.6 52.4">
<defs>
<linearGradient id="tg" x1="0" y1="0" x2="0" y2="1">
<stop offset="0" stop-color="#744412"/><stop offset="0.1" stop-color="#925e26"/><stop offset="0.3" stop-color="#8a7862"/><stop offset="0.55" stop-color="#7c8892"/><stop offset="1" stop-color="#74828e"/>
</linearGradient>
<filter id="nz" x="0" y="0" width="100%" height="100%"><feTurbulence type="fractalNoise" baseFrequency="0.55" numOctaves="2" seed="3"/><feColorMatrix type="matrix" values="0 0 0 0 0.35  0 0 0 0 0.22  0 0 0 0 0.1  0 0 0 2.2 -1.15"/></filter>
<filter id="nz2" x="0" y="0" width="100%" height="100%"><feTurbulence type="fractalNoise" baseFrequency="0.6" numOctaves="1" seed="9"/><feColorMatrix type="matrix" values="0 0 0 0 0.9  0 0 0 0 0.93  0 0 0 0 0.95  0 0 0 2.4 -1.2"/></filter>
</defs>
<rect width="48.6" height="52.4" fill="url(#tg)"/>
<rect width="48.6" height="52.4" filter="url(#nz)" opacity="0.9"/>
<rect width="48.6" height="52.4" filter="url(#nz2)" opacity="0.45"/>
<rect x="0" y="0" width="1.5" height="52.4" fill="#7a5a30" opacity="0.6"/><rect x="47.1" y="0" width="1.5" height="52.4" fill="#7a5a30" opacity="0.6"/>
</svg>
<div class="a" style="left:849px;top:138.5px;font-size:7.2px;line-height:9px">512x512</div>
<div class="a btn" style="left:848.6px;top:156.3px;width:39.1px;height:14.5px;line-height:12.5px"><u>B</u>rowse...</div>
<div class="a btn" style="left:848.6px;top:174.3px;width:39.1px;height:15.2px;line-height:13px"><u>R</u>eplace...</div>
<div class="a" style="left:889.2px;top:174.3px;width:1.8px;height:16.6px;background:#d08080"></div>
</body></html>
